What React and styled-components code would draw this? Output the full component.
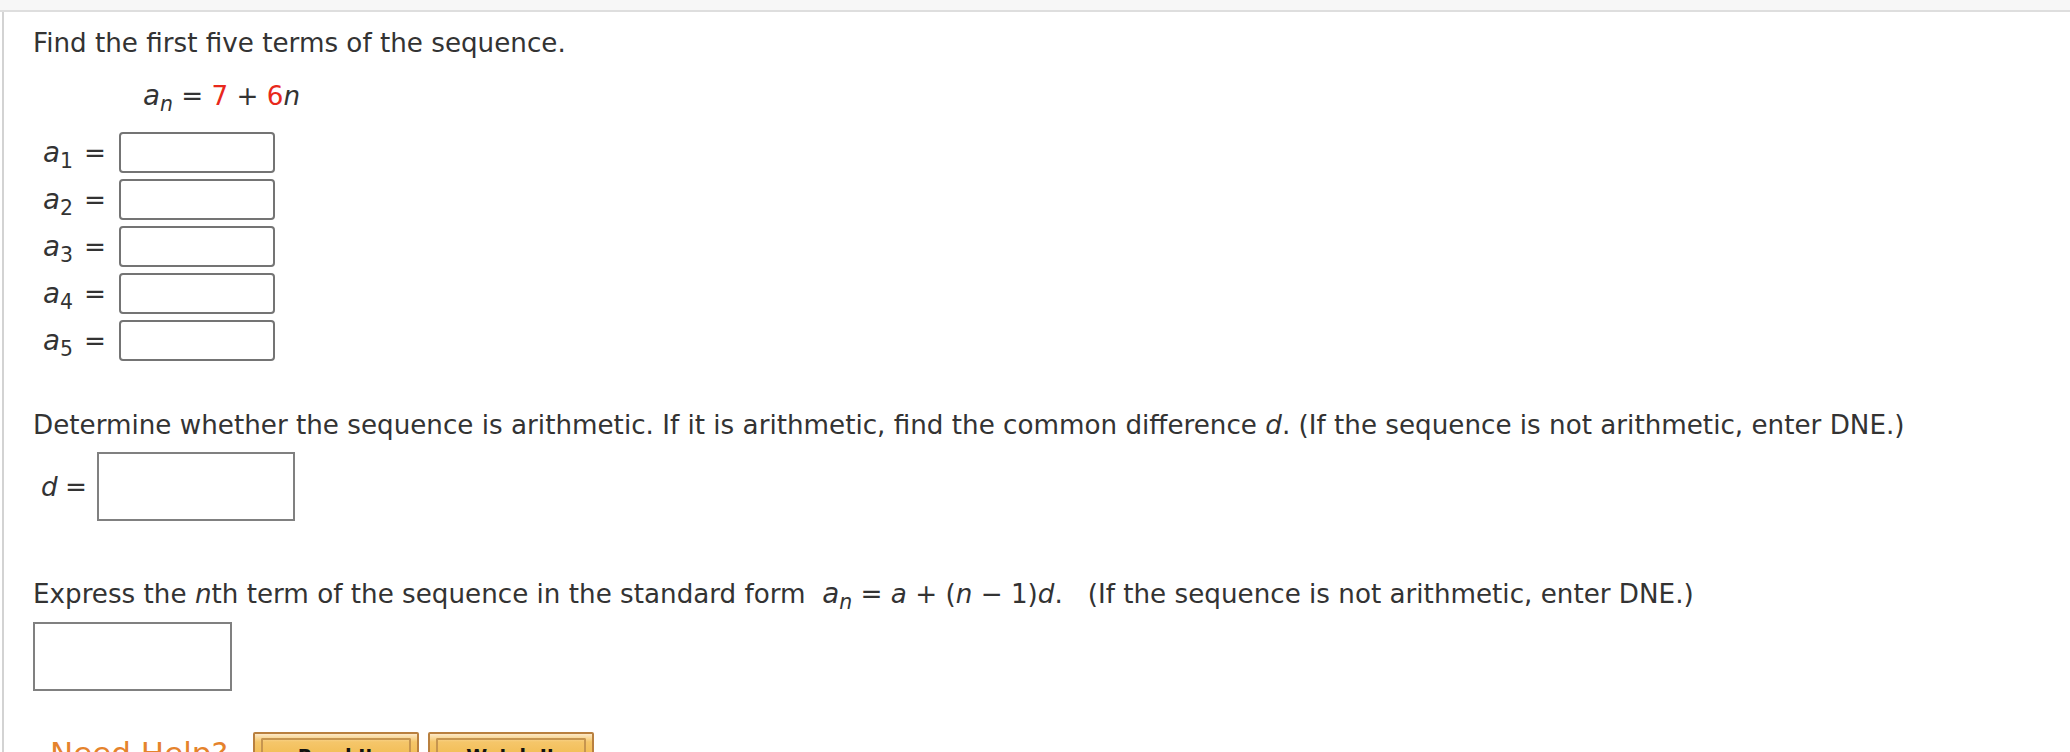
import React from "react";
import styled, { createGlobalStyle } from "styled-components";

const GlobalStyle = createGlobalStyle`
  html, body {
    margin: 0;
    padding: 0;
    background: #ffffff;
  }
  body {
    font-family: "DejaVu Sans", Verdana, sans-serif;
    color: #333333;
  }
`;

const Page = styled.div`
  width: 2070px;
  height: 752px;
  overflow: hidden;
  background: #ffffff;
`;

const TopBar = styled.div`
  height: 10px;
  background: #f7f7f7;
  border-bottom: 2px solid #dedede;
`;

const Panel = styled.div`
  margin-left: 2px;
  border-left: 2px solid #d3d3d3;
  padding: 15px 0 0 29px;
  min-height: 740px;
  font-size: 26.2px;
  line-height: 32px;
`;

const Prompt = styled.p`
  margin: ${props => props.top || 0}px 0 0 0;
  white-space: nowrap;
`;

const Formula = styled.div`
  margin: 21px 0 0 110px;
  white-space: nowrap;
`;

const Var = styled.i`
  font-style: italic;
  font-size: ${props => (props.big ? "1.06em" : "1em")};
`;

const Sub = styled.sub`
  font-size: 0.78em;
  font-style: ${props => (props.italic ? "italic" : "normal")};
  vertical-align: -0.28em;
  line-height: 0;
`;

const Red = styled.span`
  color: #e8281c;
`;

const Terms = styled.div`
  display: grid;
  row-gap: 6px;
  margin-top: 20px;
`;

const Row = styled.div`
  display: flex;
  align-items: center;
  height: ${props => props.height}px;
  margin-top: ${props => props.top || 0}px;
`;

const Label = styled.span`
  box-sizing: border-box;
  display: inline-block;
  width: ${props => props.width}px;
  padding-left: ${props => props.indent}px;
  white-space: nowrap;
`;

const Eq = styled.span`
  display: inline-block;
  width: ${props => props.width}px;
  text-align: center;
`;

const Box = styled.input`
  box-sizing: border-box;
  width: ${props => props.width}px;
  height: ${props => props.height}px;
  margin: 0 0 0 ${props => props.gap || 0}px;
  padding: 0 6px;
  border: 2px solid ${props => (props.rounded ? "#747474" : "#808080")};
  border-radius: ${props => (props.rounded ? "4px" : "0")};
  background: #ffffff;
  font: inherit;
  outline: none;
`;

const HelpRow = styled.div`
  display: flex;
  align-items: flex-start;
  margin-top: 41px;
`;

const NeedHelp = styled.span`
  margin: 1px 25px 0 17px;
  font-size: 31px;
  line-height: 40px;
  color: #e5832c;
  white-space: nowrap;
`;

const HelpButton = styled.button`
  box-sizing: border-box;
  width: 166px;
  height: 40px;
  margin-right: 9px;
  padding: 4px 6px;
  border: 2px solid #b9803f;
  border-radius: 2px;
  background: linear-gradient(#fde9c6 0%, #f5c66a 22%, #f2bd55 60%, #eeb44a 100%);
  cursor: pointer;
`;

const ButtonFace = styled.span`
  display: block;
  height: 100%;
  border: 2px solid #c6954f;
  border-bottom: none;
  border-radius: 2px 2px 0 0;
  padding-top: 5px;
  font-family: "DejaVu Sans", Verdana, sans-serif;
  font-weight: 700;
  font-size: 19px;
  color: #111111;
  text-align: center;
`;

const terms = [1, 2, 3, 4, 5];

export default function App() {
  return (
    <Page>
      <GlobalStyle />
      <TopBar />
      <Panel>
        <Prompt>Find the first five terms of the sequence.</Prompt>
        <Formula>
          <Var big>a</Var>
          <Sub italic>n</Sub> = <Red>7</Red> + <Red>6</Red>
          <Var>n</Var>
        </Formula>
        <Terms>
          {terms.map(k => (
            <Row key={k} height={41}>
              <Label width={44} indent={10}>
                <Var big>a</Var>
                <Sub>{k}</Sub>
              </Label>
              <Eq width={36}>=</Eq>
              <Box rounded width={156} height={41} gap={6} />
            </Row>
          ))}
        </Terms>

        <Prompt top={48}>
          Determine whether the sequence is arithmetic. If it is arithmetic, find the
          common difference <Var>d</Var>. (If the sequence is not arithmetic, enter DNE.)
        </Prompt>
        <Row height={69} top={11}>
          <Label width={32} indent={8}>
            <Var>d</Var>
          </Label>
          <Eq width={22}>=</Eq>
          <Box width={198} height={69} gap={10} />
        </Row>

        <Prompt top={57}>
          Express the <Var>n</Var>th term of the sequence in the standard form{"\u00a0 "}
          <Var big>a</Var>
          <Sub italic>n</Sub> = <Var>a</Var> + (<Var>n</Var> {"\u2212"} 1)<Var>d</Var>.
          {"\u00a0\u00a0 "}(If the sequence is not arithmetic, enter DNE.)
        </Prompt>
        <Row height={69} top={12}>
          <Box width={199} height={69} />
        </Row>

        <HelpRow>
          <NeedHelp>Need Help?</NeedHelp>
          <HelpButton>
            <ButtonFace>Read It</ButtonFace>
          </HelpButton>
          <HelpButton>
            <ButtonFace>Watch It</ButtonFace>
          </HelpButton>
        </HelpRow>
      </Panel>
    </Page>
  );
}
